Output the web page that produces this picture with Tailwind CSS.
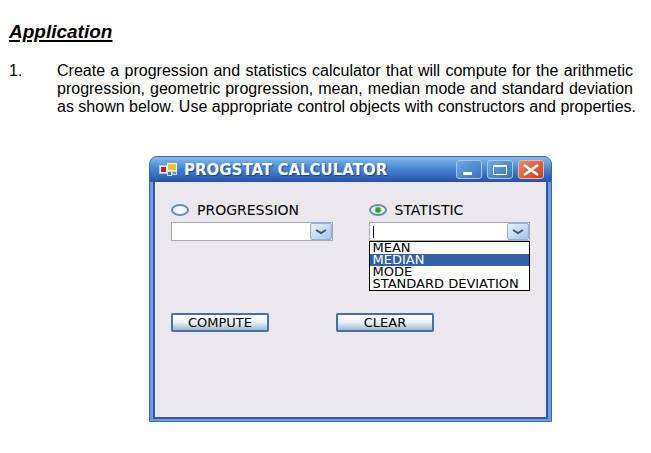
<!DOCTYPE html>
<html lang="en">
<head>
    <meta charset="UTF-8">
    <meta name="viewport" content="width=device-width, initial-scale=1.0">
    <title>Application</title>
    <script src="https://cdn.jsdelivr.net/npm/@tailwindcss/browser@4"></script>
</head>
<body class="bg-white text-black font-['Liberation_Sans',Arial,sans-serif]">
    <main class="pt-5 pr-[18px] pb-7 pl-[9px]">
        <h1 class="text-[19px] leading-6 font-bold italic underline decoration-2 underline-offset-2">Application</h1>
        <div class="mt-[18px] flex text-base leading-[18px]">
            <span class="w-12 shrink-0">1.</span>
            <p class="min-w-0 flex-1 text-justify [text-align-last:justify]">Create a progression and statistics calculator that will compute for the arithmetic progression, geometric progression, mean, median mode and standard deviation <span class="block whitespace-nowrap">as shown below. Use appropriate control objects with constructors and properties.</span></p>
        </div>

        <!-- Calculator window -->
        <section class="mt-10 ml-[140px] mr-[81px] rounded-t-lg border border-[#3a66b4] bg-[#6a9fdf] px-[3px] pb-[2px] font-['DejaVu_Sans',Verdana,sans-serif] text-[14px]">
            <header class="-mx-[3px] flex h-[25px] items-center rounded-t-[7px] bg-linear-to-b from-[#82baec] via-[#4583d0] to-[#2751ab] pr-[7px] pl-[9px]">
                <svg class="h-[15px] w-[19px]" viewBox="0 0 19 15">
                    <rect x="0.500" y="3.500" width="8" height="8" fill="#e9eef8" stroke="#b5c7e6"/>
                    <rect x="2" y="5" width="5" height="5" fill="#c91c24"/>
                    <rect x="8.500" y="1.500" width="9" height="7" fill="#f3c52d" stroke="#fff3bd"/>
                    <rect x="8.500" y="9.500" width="4" height="4" fill="#3b74cc" stroke="#c5d8f2"/>
                    <rect x="13.500" y="9.500" width="4" height="3" fill="#5b8ed8" stroke="#c5d8f2"/>
                </svg>
                <h2 class="ml-[6px] flex-1 whitespace-nowrap text-[15px] leading-4 font-bold text-white [text-shadow:1px_1px_1px_#1c3f8c]">PROGSTAT CALCULATOR</h2>
                <div class="flex gap-[5px]">
                    <button type="button" aria-label="Minimize" class="h-[19px] w-[26px] rounded-[3px] border border-[#a5c9ef] bg-linear-to-br from-[#72a9e3] to-[#3a70c0]">
                        <svg class="h-4 w-6" viewBox="0 0 24 16"><path d="M6 11.500h9" stroke="#fff" stroke-width="3"/></svg>
                    </button>
                    <button type="button" aria-label="Maximize" class="h-[19px] w-[26px] rounded-[3px] border border-[#a5c9ef] bg-linear-to-br from-[#72a9e3] to-[#3a70c0]">
                        <svg class="h-4 w-6" viewBox="0 0 24 16"><path d="M5.500 3.500h13v9h-13z" fill="none" stroke="#fff"/><path d="M5 4h14" stroke="#fff" stroke-width="2"/></svg>
                    </button>
                    <button type="button" aria-label="Close" class="h-[19px] w-[26px] rounded-[3px] border border-[#f0b5a5] bg-linear-to-br from-[#e88769] to-[#c93a18]">
                        <svg class="h-4 w-6" viewBox="0 0 24 16"><path d="M5 3l14 10M19 3L5 13" stroke="#fff" stroke-width="2.500"/></svg>
                    </button>
                </div>
            </header>

            <form class="border-2 border-t-0 border-[#3657a5] bg-[#ebe8ed] px-4 pt-5 pb-[85px]">
                <div class="grid grid-cols-2 gap-9">
                    <div>
                        <label class="flex h-[15px] items-center gap-2">
                            <input type="radio" name="mode" class="h-[12px] w-[18px] appearance-none rounded-[50%] border-2 border-[#648eac] bg-[#f3f4f5]">
                            <span class="leading-4">PROGRESSION</span>
                        </label>
                        <div class="relative mt-[5px]">
                            <select aria-label="Progression" class="block h-[19px] w-full appearance-none border border-[#a7a9ae] bg-white px-1"></select>
                            <span class="pointer-events-none absolute inset-y-px right-px flex w-[22px] items-center justify-center rounded-[2px] border border-[#94b1d3] bg-linear-to-br from-[#e5effb] to-[#a9c5e7]">
                                <svg class="h-[6px] w-[12px]" viewBox="0 0 12 6"><path d="M1 1l5 3 5-3" fill="none" stroke="#45546b" stroke-width="2"/></svg>
                            </span>
                        </div>
                    </div>
                    <div>
                        <label class="flex h-[15px] items-center gap-2">
                            <input type="radio" name="mode" checked class="h-[12px] w-[18px] appearance-none rounded-[50%] border-2 border-[#648eac] bg-[radial-gradient(circle_at_center,#25a825_2px,#f3f4f5_4px)]">
                            <span class="leading-4">STATISTIC</span>
                        </label>
                        <div class="relative mt-[5px]">
                            <div class="flex h-[19px] items-center border border-[#a7a9ae] bg-white">
                                <span class="ml-[3px] h-3 w-px bg-black"></span>
                                <input type="text" aria-label="Statistic" class="min-w-0 flex-1 outline-none">
                                <button type="button" aria-label="Open list" class="flex h-[17px] w-[22px] items-center justify-center rounded-[2px] border border-[#94b1d3] bg-linear-to-br from-[#e5effb] to-[#a9c5e7]">
                                    <svg class="h-[6px] w-[12px]" viewBox="0 0 12 6"><path d="M1 1l5 3 5-3" fill="none" stroke="#45546b" stroke-width="2"/></svg>
                                </button>
                            </div>
                            <ul role="listbox" aria-label="Statistic options" class="absolute inset-x-0 top-full overflow-hidden border border-black bg-white text-[13px] leading-3 whitespace-nowrap">
                                <li role="option" class="pl-[3px]">MEAN</li>
                                <li role="option" aria-selected="true" class="bg-[#315fa8] pl-[3px] text-white">MEDIAN</li>
                                <li role="option" class="pl-[3px]">MODE</li>
                                <li role="option" class="pl-[3px]">STANDARD DEVIATION</li>
                            </ul>
                        </div>
                    </div>
                </div>
                <div class="mt-[72px] flex gap-[67px]">
                    <button type="button" class="h-[19px] w-[98px] rounded-[2px] border-2 border-[#456fa6] bg-linear-to-b from-white via-[#eaf0f7] to-[#9fb6d2] text-[13px] leading-[15px]">COMPUTE</button>
                    <button type="button" class="h-[19px] w-[98px] rounded-[2px] border-2 border-[#456fa6] bg-linear-to-b from-white via-[#eaf0f7] to-[#9fb6d2] text-[13px] leading-[15px]">CLEAR</button>
                </div>
            </form>
        </section>
    </main>
</body>
</html>
